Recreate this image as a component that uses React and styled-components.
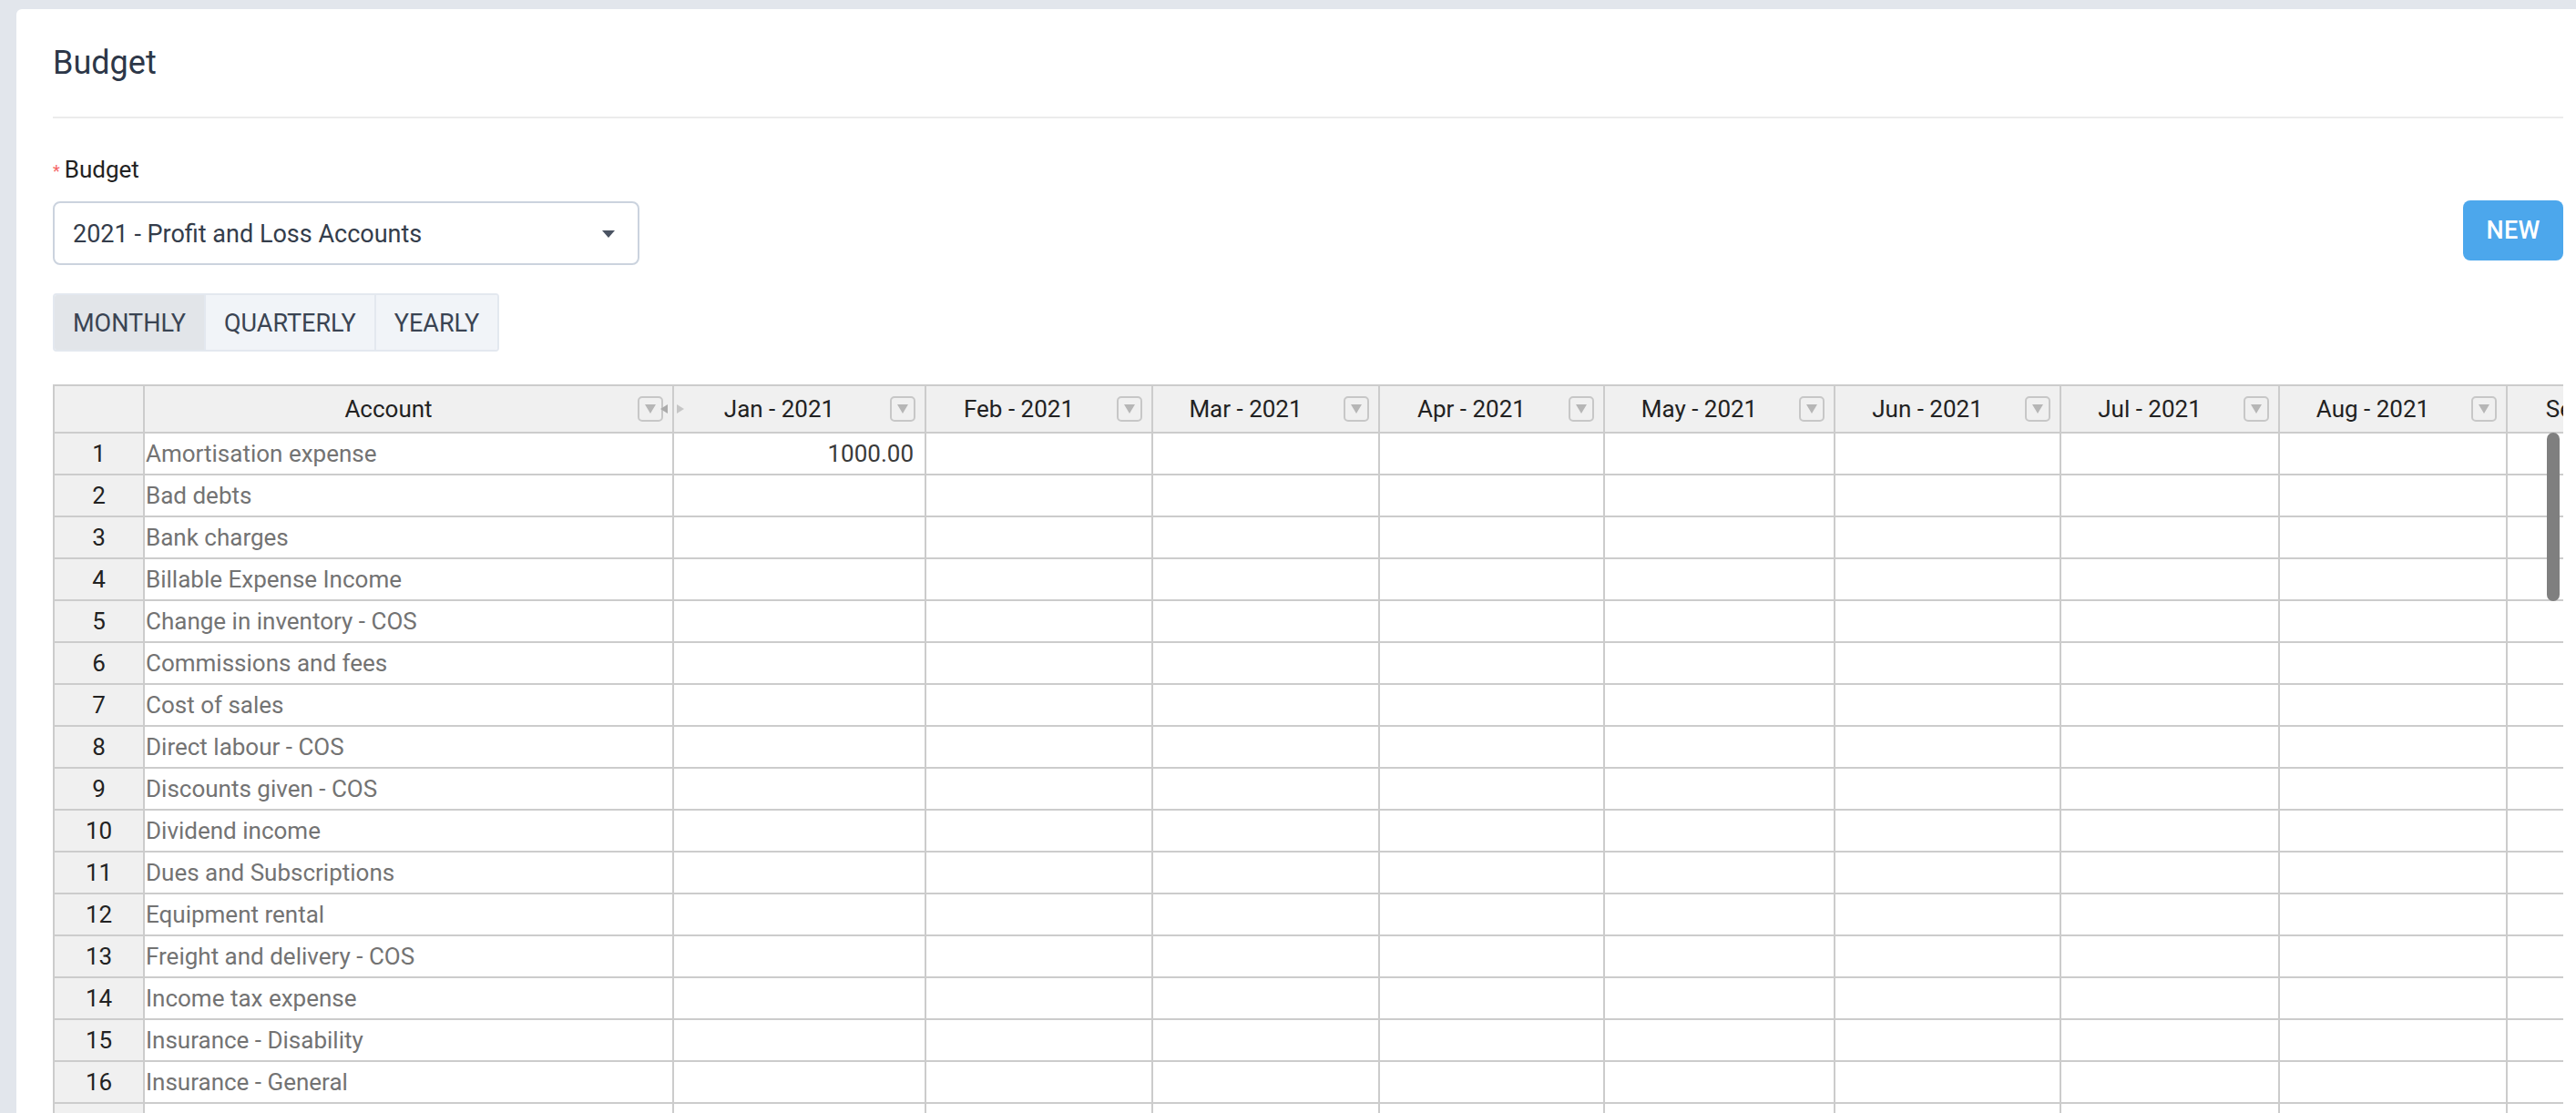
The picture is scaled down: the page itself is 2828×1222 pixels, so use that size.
import React from 'react';
import styled, { createGlobalStyle } from 'styled-components';

const Global = createGlobalStyle`
  html, body { margin: 0; padding: 0; overflow: hidden; background: #e2e6ec; }
  body { font-family: Roboto, "Liberation Sans", Arial, sans-serif; }
  *, *::before, *::after { box-sizing: border-box; }
`;

const Page = styled.div`
  padding: 10px 0 0 18px;
  height: 1222px;
`;

const Card = styled.div`
  background: #fff;
  border-top-left-radius: 6px;
  height: 100%;
  padding: 38px 14px 0 40px;
  overflow: hidden;
`;

const Title = styled.h1`
  margin: 0;
  font-size: 36px;
  line-height: 43px;
  font-weight: 400;
  color: #2d3748;
`;

const Divider = styled.div`
  margin-top: 37px;
  height: 2px;
  background: #ececec;
`;

const Field = styled.div`
  margin-top: 37px;
`;

const Label = styled.label`
  display: flex;
  align-items: center;
  font-size: 26px;
  line-height: 39px;
  color: #222;
  margin-bottom: 15px;
`;

const Required = styled.span`
  color: #f56565;
  font-size: 18px;
  line-height: 1;
  margin-right: 5px;
  position: relative;
  top: 1px;
`;

const SelectRow = styled.div`
  display: flex;
  justify-content: space-between;
  align-items: flex-start;
`;

const Select = styled.div`
  width: 644px;
  height: 70px;
  border: 2px solid #cbd3de;
  border-radius: 8px;
  display: flex;
  align-items: center;
  justify-content: space-between;
  padding: 1px 25px 0 20px;
  font-size: 27px;
  color: #343d4b;
`;

const Caret = styled.span`
  width: 0;
  height: 0;
  border-left: 7.5px solid transparent;
  border-right: 7.5px solid transparent;
  border-top: 8px solid #4a5362;
`;

const NewButton = styled.button`
  width: 110px;
  height: 66px;
  border: 0;
  border-radius: 8px;
  background: #4ca7ec;
  color: #fff;
  font-family: inherit;
  font-size: 27px;
  font-weight: 500;
  letter-spacing: 0.3px;
  margin-top: -1px;
`;

const Segmented = styled.div`
  display: inline-flex;
  margin-top: 31px;
  height: 64px;
  border: 2px solid #e3e8ef;
  border-radius: 4px;
  overflow: hidden;
`;

const Segment = styled.div`
  display: flex;
  align-items: center;
  padding: 1px 20px 0;
  font-size: 27px;
  color: #3a4453;
  background: ${p => (p.$active ? '#e2e5e9' : '#f1f4f8')};
  & + & { border-left: 2px solid #e3e8ef; }
`;

const TableWrap = styled.div`
  position: relative;
  margin-top: 36px;
  overflow: hidden;
  height: 900px;
`;

const Row = styled.div`
  display: flex;
  width: max-content;
`;

const Cell = styled.div`
  position: relative;
  flex: 0 0 auto;
  width: ${p => p.$w}px;
  height: ${p => (p.$head ? 54 : 46)}px;
  border-right: 2px solid #cccccc;
  border-bottom: 2px solid #cccccc;
  border-top: ${p => (p.$head ? '2px solid #cccccc' : '0')};
  border-left: ${p => (p.$first ? '2px solid #cccccc' : '0')};
  background: ${p => (p.$head || p.$first ? '#f0f0f0' : '#ffffff')};
  display: flex;
  align-items: center;
  font-size: 26px;
  white-space: nowrap;
  overflow: hidden;
`;

const RowNum = styled.span`
  flex: 1;
  text-align: center;
  color: #222;
`;

const AccountText = styled.span`
  padding-left: 1px;
  color: #737373;
`;

const ValueText = styled.span`
  flex: 1;
  text-align: right;
  padding-right: 12px;
  color: #3a3a3a;
`;

const HeadLabel = styled.span`
  flex: 1;
  text-align: center;
  color: #222;
`;

const FilterBtn = styled.span`
  flex: 0 0 28px;
  height: 28px;
  margin: 0 10px 0 6px;
  border: 2px solid #c7c7c7;
  border-radius: 5px;
  display: flex;
  align-items: center;
  justify-content: center;
  &::after {
    content: '';
    width: 0;
    height: 0;
    border-left: 6.5px solid transparent;
    border-right: 6.5px solid transparent;
    border-top: 10px solid #b6b6b6;
  }
`;

const HiddenArrow = styled.span`
  position: absolute;
  top: 20px;
  ${p => (p.$dir === 'left' ? 'right: 5px;' : 'left: 3px;')}
  width: 0;
  height: 0;
  border-top: 5px solid transparent;
  border-bottom: 5px solid transparent;
  ${p =>
    p.$dir === 'left'
      ? 'border-right: 8px solid #ababab;'
      : 'border-left: 8px solid #c6c6c6;'}
`;

const Scrollbar = styled.div`
  position: absolute;
  top: 53px;
  right: 4px;
  width: 14px;
  height: 185px;
  border-radius: 7px;
  background: #7f7f7f;
`;

const months = ['Jan', 'Feb', 'Mar', 'Apr', 'May', 'Jun', 'Jul', 'Aug', 'Sep', 'Oct', 'Nov', 'Dec'];
const widths = [277, 249, 249, 247, 253, 248, 240, 250, 252, 250, 250, 250];

const accounts = [
  'Amortisation expense',
  'Bad debts',
  'Bank charges',
  'Billable Expense Income',
  'Change in inventory - COS',
  'Commissions and fees',
  'Cost of sales',
  'Direct labour - COS',
  'Discounts given - COS',
  'Dividend income',
  'Dues and Subscriptions',
  'Equipment rental',
  'Freight and delivery - COS',
  'Income tax expense',
  'Insurance - Disability',
  'Insurance - General',
  'Insurance - Liability',
  'Interest expense',
  'Interest income',
  'Legal and professional fees',
];

const values = { 0: { 0: '1000.00' } };

export default function App() {
  return (
    <>
      <Global />
      <Page>
        <Card>
          <Title>Budget</Title>
          <Divider />
          <Field>
            <Label>
              <Required>*</Required>Budget
            </Label>
            <SelectRow>
              <Select>
                <span>2021 - Profit and Loss Accounts</span>
                <Caret />
              </Select>
              <NewButton>NEW</NewButton>
            </SelectRow>
          </Field>
          <Segmented>
            <Segment $active>MONTHLY</Segment>
            <Segment>QUARTERLY</Segment>
            <Segment>YEARLY</Segment>
          </Segmented>
          <TableWrap>
            <Row>
              <Cell $w={101} $head $first />
              <Cell $w={581} $head>
                <HeadLabel>Account</HeadLabel>
                <FilterBtn />
                <HiddenArrow $dir="left" />
              </Cell>
              {months.map((m, i) => (
                <Cell key={m} $w={widths[i]} $head>
                  {i === 0 && <HiddenArrow $dir="right" />}
                  <HeadLabel>{m} - 2021</HeadLabel>
                  <FilterBtn />
                </Cell>
              ))}
            </Row>
            {accounts.map((a, r) => (
              <Row key={a}>
                <Cell $w={101} $first>
                  <RowNum>{r + 1}</RowNum>
                </Cell>
                <Cell $w={581}>
                  <AccountText>{a}</AccountText>
                </Cell>
                {months.map((m, i) => (
                  <Cell key={m} $w={widths[i]}>
                    {values[r] && values[r][i] ? <ValueText>{values[r][i]}</ValueText> : null}
                  </Cell>
                ))}
              </Row>
            ))}
            <Scrollbar />
          </TableWrap>
        </Card>
      </Page>
    </>
  );
}
